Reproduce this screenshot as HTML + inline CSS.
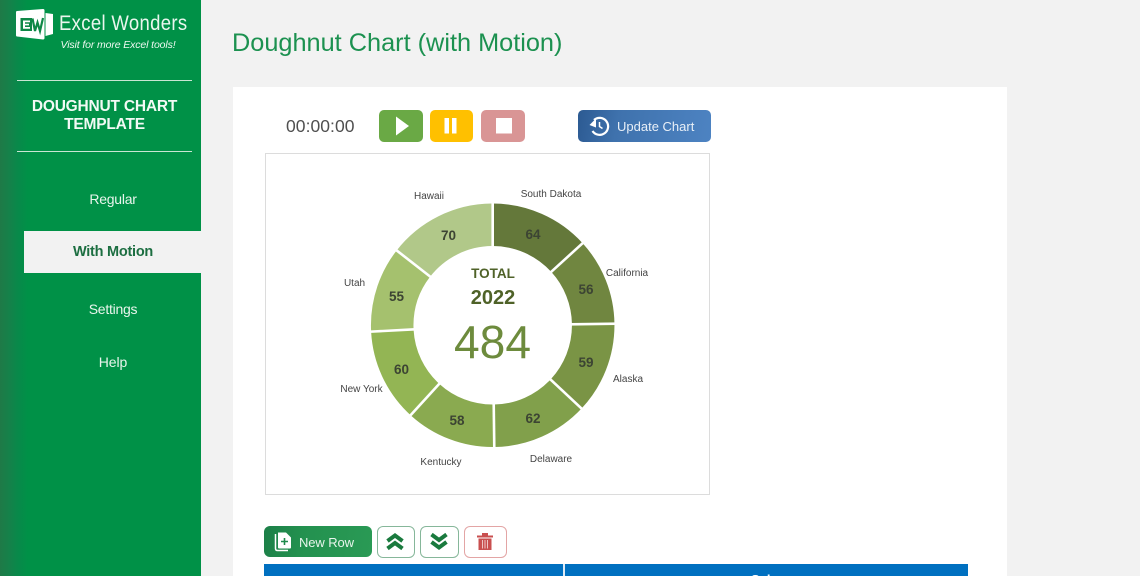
<!DOCTYPE html>
<html><head><meta charset="utf-8">
<style>
html,body{margin:0;padding:0;background:#f2f2f2}
#p{position:relative;width:1140px;height:576px;overflow:hidden;background:#f2f2f2;font-family:"Liberation Sans",sans-serif}
.a{position:absolute;white-space:nowrap}
.c{text-align:center}
svg{position:absolute;left:0;top:0;overflow:visible}
</style></head>
<body><div id="p">
<div class="a" style="left:0;top:0;width:201px;height:576px;background:linear-gradient(90deg,#1f7a47 0,#14824a 10px,#08894a 18px,#009147 28px,#009147 100%)"></div>
<div class="a" style="left:17px;top:80px;width:175px;height:1px;background:#c9e6d3"></div>
<div class="a" style="left:17px;top:151px;width:175px;height:1px;background:#c9e6d3"></div>
<div class="a" style="left:59px;top:9px;font-size:21.5px;line-height:28px;color:#eaf6ee;letter-spacing:.4px;transform-origin:0 0;transform:scaleX(.86)">Excel Wonders</div>
<div class="a" style="left:60.500px;top:38px;font-size:10.5px;line-height:14px;font-style:italic;color:#eef8f1;letter-spacing:-.12px">Visit for more Excel tools!</div>
<div class="a c" style="left:17px;top:98px;width:175px;font-size:15.5px;line-height:17.5px;font-weight:bold;color:#f2faf5;letter-spacing:-.2px">DOUGHNUT CHART<br>TEMPLATE</div>
<div class="a" style="left:24px;top:231px;width:177px;height:42px;background:#f2f2f2"></div>
<div class="a c" style="left:24px;top:189px;width:178px;font-size:14px;line-height:20px;color:#e8f5ec;letter-spacing:-.25px">Regular</div>
<div class="a c" style="left:24px;top:242px;width:178px;font-size:14.5px;line-height:20px;font-weight:bold;color:#1c6e41;letter-spacing:-.25px">With Motion</div>
<div class="a c" style="left:24px;top:299px;width:178px;font-size:14px;line-height:20px;color:#e8f5ec;letter-spacing:-.25px">Settings</div>
<div class="a c" style="left:24px;top:352px;width:178px;font-size:14px;line-height:20px;color:#e8f5ec;letter-spacing:-.1px">Help</div>
<div class="a" style="left:232px;top:27px;font-size:25.3px;line-height:32px;color:#1c9150">Doughnut Chart (with Motion)</div>
<div class="a" style="left:233px;top:87px;width:774px;height:489px;background:#fff"></div>
<div class="a" style="left:286px;top:115px;font-size:17.5px;line-height:22px;color:#505050;letter-spacing:.05px">00:00:00</div>
<div class="a" style="left:379px;top:110px;width:44px;height:32px;border-radius:5px;background:#6aa945"></div>
<div class="a" style="left:430px;top:110px;width:43px;height:32px;border-radius:5px;background:#ffc000"></div>
<div class="a" style="left:481px;top:110px;width:44px;height:32px;border-radius:5px;background:#d99595"></div>
<div class="a" style="left:578px;top:110px;width:133px;height:32px;border-radius:5px;background:linear-gradient(100deg,#2c5a92 0,#3f72ad 30%,#4d83c2 100%)"></div>
<div class="a" style="left:617px;top:118px;font-size:13px;line-height:17px;color:#e8eff7">Update Chart</div>
<div class="a" style="left:265px;top:153px;width:443px;height:340px;border:1px solid #dcdcdc;background:#fff"></div>
<div class="a" style="left:264px;top:526px;width:108px;height:31px;border-radius:6px;background:linear-gradient(100deg,#1c7f48 0,#23914f 35%,#2a9a55 100%)"></div>
<div class="a" style="left:299px;top:534px;font-size:13px;line-height:17px;color:#e8f5ec;letter-spacing:-.1px">New Row</div>
<div class="a" style="left:377px;top:526px;width:36px;height:30px;border:1px solid #86b79a;border-radius:6px;background:#fff"></div>
<div class="a" style="left:420px;top:526px;width:37px;height:30px;border:1px solid #86b79a;border-radius:6px;background:#fff"></div>
<div class="a" style="left:464px;top:526px;width:41px;height:30px;border:1px solid #e3a5a5;border-radius:6px;background:#fff"></div>
<div class="a" style="left:264px;top:564px;width:704px;height:12px;background:#0070c0;overflow:hidden">
<div class="a" style="left:299px;top:0;width:2px;height:12px;background:#dfeaf5"></div>
<div class="a" style="left:487px;top:7.500px;font-size:13px;line-height:15px;font-weight:bold;color:#fff">Sales</div>
</div>
<svg width="1140" height="576" viewBox="0 0 1140 576">
<!-- logo -->
<path d="M45.500 13 L53 14 V34 L45.500 36Z" fill="#fff"/>
<path d="M17 11 L43 9 Q44.500 9 44.500 10.500 V38 Q44.500 39.500 43 39.500 L17 36.500 Q16 36.500 16 35 V12.500 Q16 11 17 11Z" fill="#fff"/>
<rect x="20.500" y="18" width="11.500" height="13" fill="#0e8746"/>
<path d="M23 20.500H30V22.300H25V23.700H29V25.400H25V27H30V28.700H23Z" fill="#fff"/>
<path d="M32.500 18.500 L35 31 L37.500 22.500 L40 31 L43 18" fill="none" stroke="#0e8746" stroke-width="2.200"/>
<!-- play pause stop -->
<path d="M396 116.500 L409 126 L396 135.500Z" fill="#fff"/>
<rect x="444.500" y="118" width="4.500" height="15.500" fill="#fff"/>
<rect x="452" y="118" width="4.500" height="15.500" fill="#fff"/>
<rect x="496" y="118" width="16" height="15.500" fill="#fff"/>
<!-- update -->
<path d="M594 120 A8.500 8.500 0 1 1 592.500 131" fill="none" stroke="#fff" stroke-width="2.200"/>
<path d="M589.500 125 L596 118.500 V127.500Z" fill="#fff"/>
<path d="M599.500 122 V126.500 L602.500 128.500" fill="none" stroke="#fff" stroke-width="1.500"/>
<!-- new row -->
<path d="M275.500 534 V548.500 Q275.500 550.500 277.500 550.500 H288" fill="none" stroke="#fff" stroke-width="1.500"/>
<path d="M278 532.500 H286 L291 537.500 V547.500 Q291 548.500 290 548.500 H279 Q278 548.500 278 547.500Z" fill="#fff"/>
<path d="M284.500 538 V545 M281 541.500 H288" stroke="#1e8a4c" stroke-width="1.600"/>
<!-- chevrons -->
<path d="M387.500 541 L395 535.500 L402.500 541 M387.500 548.500 L395 543 L402.500 548.500" fill="none" stroke="#1a7a3e" stroke-width="4"/>
<path d="M431.500 534.500 L439 540 L446.500 534.500 M431.500 542 L439 547.500 L446.500 542" fill="none" stroke="#1a7a3e" stroke-width="4"/>
<!-- trash -->
<path d="M477 535.500 H493 V537.500 H477Z M482 533 H488 V535.500 H482Z" fill="#c94f4f"/>
<path d="M478.500 538.500 H491.500 V550 H478.500Z" fill="#c94f4f"/>
<path d="M482.500 540 V548.500 M485 540 V548.500 M487.500 540 V548.500" stroke="#eec5c5" stroke-width="1"/>
<!-- doughnut -->
<g transform="translate(492.700 325.300) rotate(-90)" fill="none" stroke-width="42.500">
<circle r="100.500" pathLength="484" stroke="#64783a" stroke-dasharray="64 420" stroke-dashoffset="0"/>
<circle r="100.500" pathLength="484" stroke="#708640" stroke-dasharray="56 428" stroke-dashoffset="-64"/>
<circle r="100.500" pathLength="484" stroke="#7a9445" stroke-dasharray="59 425" stroke-dashoffset="-120"/>
<circle r="100.500" pathLength="484" stroke="#81a04b" stroke-dasharray="62 422" stroke-dashoffset="-179"/>
<circle r="100.500" pathLength="484" stroke="#8aaa50" stroke-dasharray="58 426" stroke-dashoffset="-241"/>
<circle r="100.500" pathLength="484" stroke="#93b554" stroke-dasharray="60 424" stroke-dashoffset="-299"/>
<circle r="100.500" pathLength="484" stroke="#a5c16e" stroke-dasharray="55 429" stroke-dashoffset="-359"/>
<circle r="100.500" pathLength="484" stroke="#b1c889" stroke-dasharray="70 414" stroke-dashoffset="-414"/>
</g>
<g transform="translate(492.700 325.300)" stroke="#fff" stroke-width="2.600">
<line y1="-78" y2="-124" transform="rotate(0)"/>
<line y1="-78" y2="-124" transform="rotate(47.600)"/>
<line y1="-78" y2="-124" transform="rotate(89.260)"/>
<line y1="-78" y2="-124" transform="rotate(133.140)"/>
<line y1="-78" y2="-124" transform="rotate(179.260)"/>
<line y1="-78" y2="-124" transform="rotate(222.400)"/>
<line y1="-78" y2="-124" transform="rotate(267.020)"/>
<line y1="-78" y2="-124" transform="rotate(307.930)"/>
</g>
<g font-family="Liberation Sans" font-weight="bold" font-size="13.500" fill="#3c4433" text-anchor="middle">
<text x="533" y="239">64</text>
<text x="586" y="294">56</text>
<text x="586" y="367">59</text>
<text x="533" y="423">62</text>
<text x="457" y="425">58</text>
<text x="401.500" y="374">60</text>
<text x="396.500" y="301">55</text>
<text x="448.500" y="240">70</text>
</g>
<g font-family="Liberation Sans" font-size="10" fill="#444" text-anchor="middle">
<text x="551" y="197">South Dakota</text>
<text x="627" y="276">California</text>
<text x="628" y="382">Alaska</text>
<text x="551" y="462">Delaware</text>
<text x="441" y="465">Kentucky</text>
<text x="361.500" y="392">New York</text>
<text x="354.500" y="286">Utah</text>
<text x="429" y="199">Hawaii</text>
</g>
<text x="493" y="278" font-family="Liberation Sans" font-weight="bold" font-size="13.500" fill="#4f6228" text-anchor="middle">TOTAL</text>
<text x="493" y="304" font-family="Liberation Sans" font-weight="bold" font-size="20" fill="#4f6228" text-anchor="middle">2022</text>
<text x="492.500" y="358" font-family="Liberation Sans" font-size="46" fill="#6d8b3d" text-anchor="middle" textLength="77" lengthAdjust="spacingAndGlyphs">484</text>
</svg>
</div></body></html>
